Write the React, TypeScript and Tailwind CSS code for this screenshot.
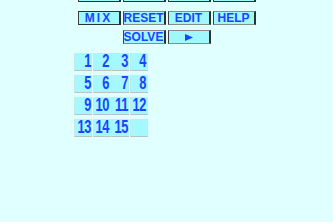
import { type FC, type ReactNode } from 'react';

const btn =
  'w-[43px] h-[14px] flex items-center justify-center bg-[#a0f8ff] text-[#1a44ff] font-bold text-[12px] leading-none border border-[#8a8a8a] border-r-2 border-r-[#303030] border-l-[#404040]';

const Btn: FC<{ label: ReactNode; dark?: boolean }> = ({ label, dark }) => (
  <div className={dark ? btn + ' border-[#303030] tracking-[2px]' : btn}>{label}</div>
);

const tiles = ['1', '2', '3', '4', '5', '6', '7', '8', '9', '10', '11', '12', '13', '14', '15', ''];

export default function App() {
  return (
    <div className="min-h-screen w-full bg-[#e0ffff] overflow-hidden" style={{ fontFamily: '"Liberation Sans", Arial, sans-serif' }}>
      {/* top row, cut off by the window */}
      <div className="flex justify-center gap-[2px] -mt-[12px]">
        <Btn label="" dark />
        <Btn label="" dark />
        <Btn label="" dark />
        <Btn label="" dark />
      </div>

      <div className="flex justify-center gap-[2px] mt-[9px]">
        <Btn label="MIX" dark />
        <Btn label="RESET" />
        <Btn label="EDIT" />
        <Btn label="HELP" />
      </div>

      <div className="flex justify-center gap-[2px] mt-[5px]">
        <Btn label="SOLVE" />
        <Btn
          label={
            <svg width="8" height="7" viewBox="0 0 8 7">
              <polygon points="0,0 8,3.5 0,7" fill="#1a44ff" />
            </svg>
          }
        />
      </div>

      <div className="ml-[74px] mt-[9px] grid grid-cols-[repeat(4,18px)] gap-x-[0.5px] gap-y-[4px] w-max">
        {tiles.map((t, i) => (
          <div
            key={i}
            className="h-[18px] bg-[#a4f8ff] border-b border-b-[#b8c4c4] border-l border-l-[#c8e8e8] flex items-end justify-end pr-[1px] text-[#1a44ff] font-bold text-[19px] leading-[18px]"
          >
            <span className="inline-block scale-x-[0.68] origin-right whitespace-nowrap tracking-[-0.5px]">{t}</span>
          </div>
        ))}
      </div>
    </div>
  );
}
